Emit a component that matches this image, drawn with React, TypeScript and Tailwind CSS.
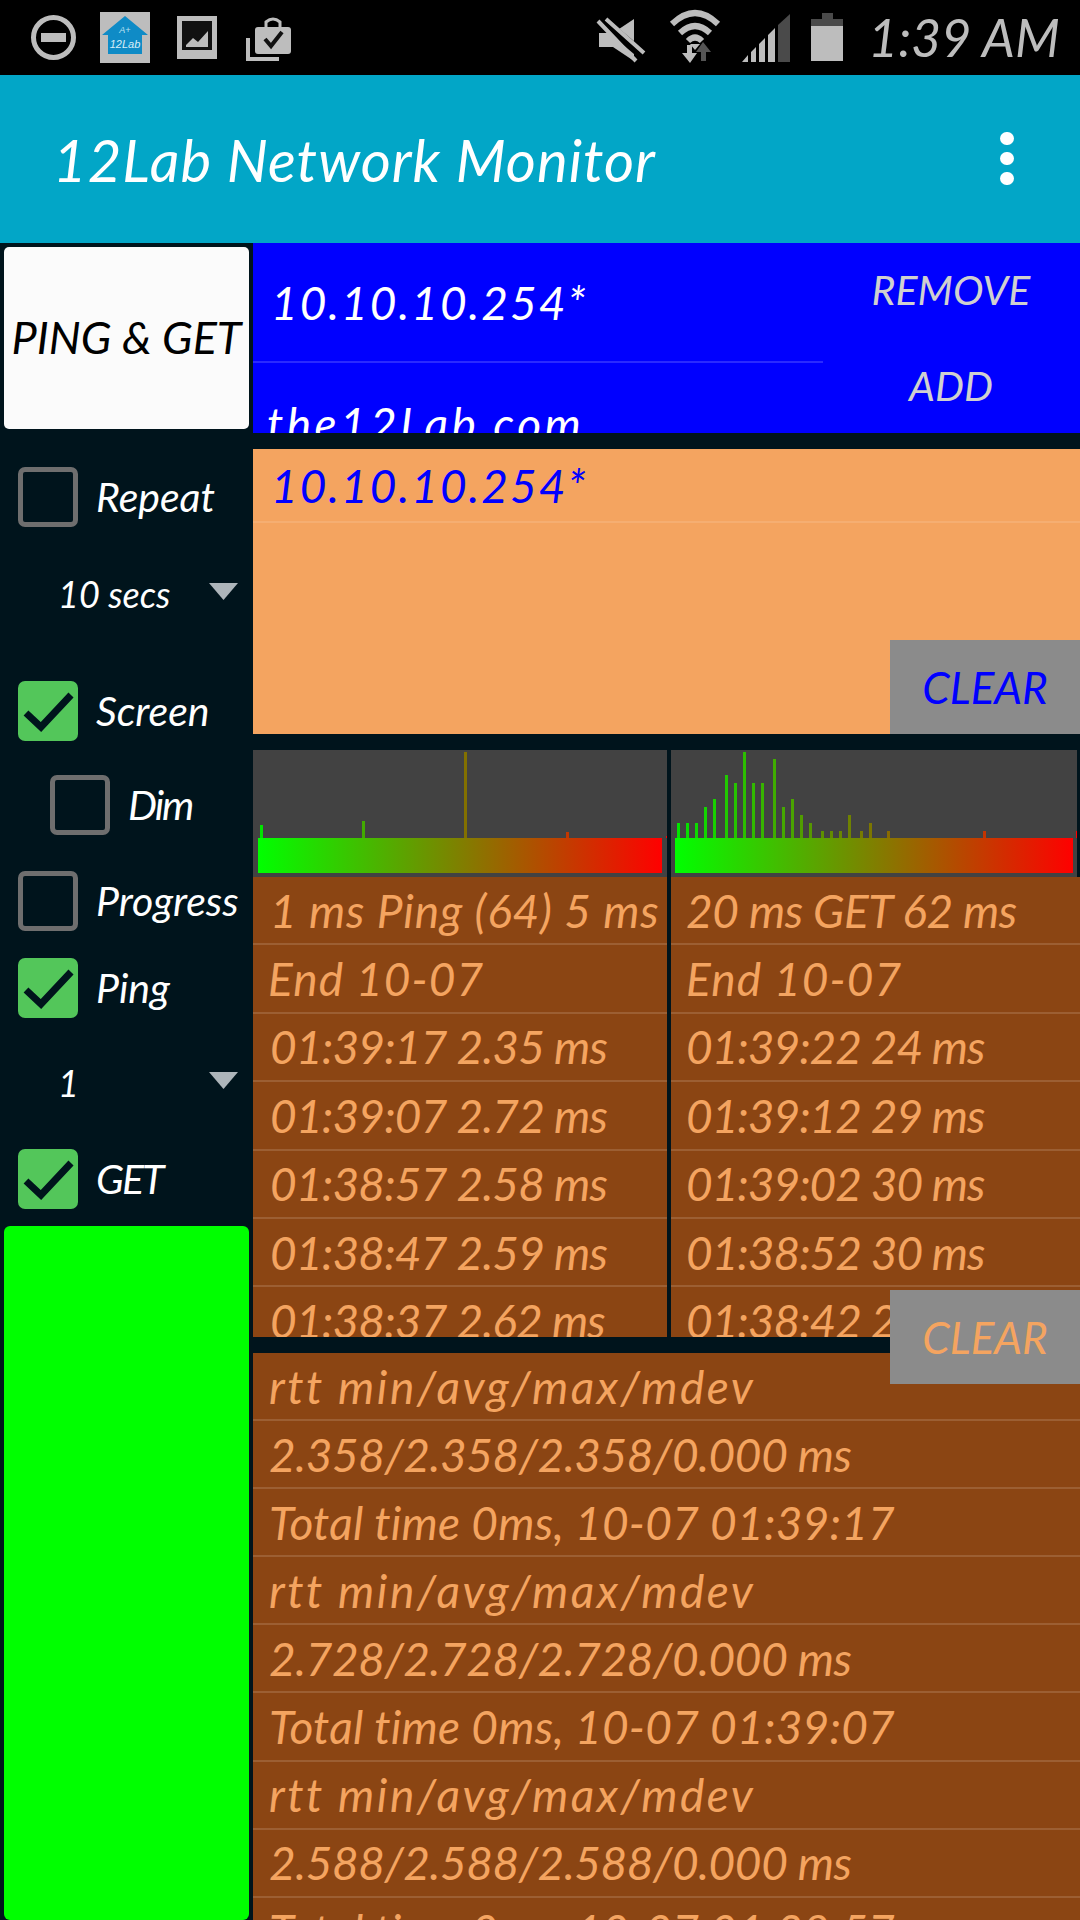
const font = "font-['Lato','Noto_Sans',sans-serif] italic";

function Check({ label, checked, indent, track }: { label: string; checked?: boolean; indent?: boolean; track?: string }) {
  return (
    <div className={`flex items-center h-[60px] gap-[18px] ${indent ? 'pl-[50px]' : 'pl-[18px]'}`}>
      {checked ? (
        <svg width="60" height="60" viewBox="0 0 60 60" className="shrink-0">
          <rect width="60" height="60" rx="7" fill="#53c65a" />
          <path d="M8 32L23 46L53 14" fill="none" stroke="#00141c" strokeWidth="7" />
        </svg>
      ) : (
        <div className="w-[60px] h-[60px] shrink-0 border-[5px] border-[#6e6e6e] rounded-[7px]" />
      )}
      <span className={`text-white text-[41px] ${track ?? ''}`}>{label}</span>
    </div>
  );
}

function Drop({ label }: { label: string }) {
  return (
    <div className="flex items-center justify-between h-[60px] pl-[58px] pr-[15px]">
      <span className="text-white text-[36px]">{label}</span>
      <svg width="29" height="17" viewBox="0 0 29 17" className="mb-[6px]">
        <polygon points="0,0 29,0 14.5,17" fill="#adb5ba" />
      </svg>
    </div>
  );
}

function Chart({ width, bars, x0, x1 }: { width: number; bars: [number, number][]; x0: number; x1: number }) {
  return (
    <svg width={width} height="127" viewBox={`0 0 ${width} 127`} className="block">
      <defs>
        <linearGradient id={`g${width}`} x1="0" x2="1" y1="0" y2="0">
          <stop offset="0" stopColor="#00ff00" />
          <stop offset="1" stopColor="#ff0000" />
        </linearGradient>
      </defs>
      <rect width={width} height="127" fill="#424242" />
      {bars.map(([x, top], i) => {
        const t = Math.min(1, Math.max(0, (x - x0) / (x1 - x0)));
        return (
          <rect
            key={i}
            x={x}
            y={top}
            width="3"
            height={88 - top}
            fill={`rgb(${Math.round(255 * t)},${Math.round(255 * (1 - t) * 0.9)},0)`}
          />
        );
      })}
      <rect x={x0} y="88" width={x1 - x0} height="35" fill={`url(#g${width})`} />
    </svg>
  );
}

function Row({ children, className }: { children: string; className?: string }) {
  return (
    <div className={`h-[68.4px] border-b-2 border-[#9c5f33] flex items-center whitespace-nowrap overflow-hidden text-[#f4a460] text-[46px] ${className ?? ''}`}>
      {children}
    </div>
  );
}

const leftRows: [string, string][] = [
  ['1 ms Ping (64) 5 ms', 'pl-[17px] tracking-[0.8px]'],
  ['End 10-07', 'pl-[15px] tracking-[1.1px]'],
  ['01:39:17 2.35 ms', 'pl-[17px] tracking-[-0.8px]'],
  ['01:39:07 2.72 ms', 'pl-[17px] tracking-[-0.8px]'],
  ['01:38:57 2.58 ms', 'pl-[17px] tracking-[-0.8px]'],
  ['01:38:47 2.59 ms', 'pl-[17px] tracking-[-0.8px]'],
  ['01:38:37 2.62 ms', 'pl-[17px] tracking-[-0.8px]'],
];
const rightRows: [string, string][] = [
  ['20 ms GET 62 ms', 'pl-[15px] tracking-[-0.4px]'],
  ['End 10-07', 'pl-[15px] tracking-[1.1px]'],
  ['01:39:22 24 ms', 'pl-[15px] tracking-[-1px]'],
  ['01:39:12 29 ms', 'pl-[15px] tracking-[-1px]'],
  ['01:39:02 30 ms', 'pl-[15px] tracking-[-1px]'],
  ['01:38:52 30 ms', 'pl-[15px] tracking-[-1px]'],
  ['01:38:42 28 ms', 'pl-[15px] tracking-[-1px]'],
];
const logRows: [string, string][] = [
  ['rtt min/avg/max/mdev', 'tracking-[2.5px]'],
  ['2.358/2.358/2.358/0.000 ms', 'tracking-[-0.4px]'],
  ['Total time 0ms, 10-07 01:39:17', 'tracking-[0.25px]'],
  ['rtt min/avg/max/mdev', 'tracking-[2.5px]'],
  ['2.728/2.728/2.728/0.000 ms', 'tracking-[-0.4px]'],
  ['Total time 0ms, 10-07 01:39:07', 'tracking-[0.25px]'],
  ['rtt min/avg/max/mdev', 'tracking-[2.5px]'],
  ['2.588/2.588/2.588/0.000 ms', 'tracking-[-0.4px]'],
  ['Total time 0ms, 10-07 01:38:57', 'tracking-[0.25px]'],
];

const leftBars: [number, number][] = [[7, 75], [109, 71], [211, 2], [313, 82], [413, 86]];
const rightBars: [number, number][] = [52, 79, 106, 133, 160, 196, 223, 250, 277, 304, 340, 367, 394, 421, 448, 484, 511, 538, 565, 601, 628, 682, 970, 1248].map((z, i) => {
  const tops = [279, 279, 279, 231, 207, 135, 159, 65, 159, 159, 87, 231, 207, 255, 279, 303, 303, 303, 255, 303, 279, 303, 303, 303];
  return [Math.round(660 + z / 3 - 671), Math.round(730 + tops[i] / 3 - 750)] as [number, number];
});

function StatusBar() {
  return (
    <div className="h-[75px] bg-black flex items-center relative shrink-0">
      <svg width="1080" height="75" viewBox="0 0 1080 75" className="block">
        <circle cx="53.5" cy="37.5" r="20" fill="none" stroke="#bdbdbd" strokeWidth="5" />
        <rect x="41" y="33" width="25" height="9" fill="#bdbdbd" />
        <rect x="100" y="12" width="50" height="51" fill="#bdbdbd" />
        <path d="M125 16L148 35H142V54H108V35H102Z" fill="#0f8bc6" />
        <text x="125" y="33" fontSize="9" fill="#bde3f2" textAnchor="middle" fontFamily="Liberation Sans">A+</text>
        <text x="125" y="48" fontSize="11" fill="#d8eef7" textAnchor="middle" fontFamily="Liberation Sans">12Lab</text>
        <rect x="177" y="16" width="40" height="43" fill="#bdbdbd" />
        <rect x="182" y="21" width="30" height="29" fill="#111" />
        <path d="M186 45L193 38L198 42L208 31V47H186Z" fill="#bdbdbd" />
        <path d="M248 38V59H279" fill="none" stroke="#bdbdbd" strokeWidth="4" />
        <rect x="255" y="27" width="36" height="27" rx="3" fill="#bdbdbd" />
        <path d="M266 27V22Q273 16 280 22V27" fill="none" stroke="#bdbdbd" strokeWidth="3" />
        <path d="M265 39L271 46L282 32" fill="none" stroke="#111" strokeWidth="4" />
        <path d="M599 33H613L634 19V61L613 47H599Z" fill="#bdbdbd" />
        <path d="M600 19L644 56" stroke="#000" strokeWidth="10" />
        <path d="M598 21L636 61M606 19L644 53" stroke="#bdbdbd" strokeWidth="4" />
        <path d="M672 24Q695 2 718 24M680 33Q695 19 710 33M688 41Q695 34 702 41" fill="none" stroke="#bdbdbd" strokeWidth="6" />
        <path d="M690 44H700L695 50Z" fill="#bdbdbd" />
        <path d="M687 45V53H682L690 63L697 53H692V45Z" fill="#bdbdbd" />
        <path d="M703 42L696 52H701V61H706V52H711Z" fill="#555" />
        <path d="M742 62L748 55V62ZM751 52L756 47V62H751ZM759 44L765 38V62H759ZM768 35L775 28V62H768Z" fill="#bdbdbd" />
        <path d="M778 25L790 14V62H778Z" fill="#4a4a4a" />
        <rect x="822" y="13" width="11" height="6" fill="#4a4a4a" />
        <rect x="811" y="19" width="32" height="7" fill="#4a4a4a" />
        <rect x="811" y="26" width="32" height="35" fill="#bdbdbd" />
      </svg>
      <span className="absolute left-[868px] top-[7px] text-[#bdbdbd] text-[52px] leading-[60px] whitespace-nowrap">1:39 AM</span>
    </div>
  );
}

export default function App() {
  return (
    <div className={`w-[1080px] h-[1920px] overflow-hidden bg-[#00141c] flex flex-col ${font}`}>
      <StatusBar />
      <div className="h-[168px] shrink-0 bg-[#02a6c7] flex items-center justify-between pl-[53px] pr-[66px]">
        <span className="text-white text-[58px] tracking-[1px]">12Lab Network Monitor</span>
        <div className="flex flex-col gap-[7px] mt-[-2px]">
          <div className="w-[14px] h-[13px] rounded-full bg-white" />
          <div className="w-[14px] h-[13px] rounded-full bg-white" />
          <div className="w-[14px] h-[13px] rounded-full bg-white" />
        </div>
      </div>
      <div className="flex flex-1 min-h-0">
        {/* left column */}
        <div className="w-[253px] shrink-0 flex flex-col">
          <div className="mx-[4px] mt-[4px] h-[182px] bg-[#fbfbfb] rounded-[5px] flex items-center justify-center text-black text-[45px] whitespace-nowrap">
            PING &amp; GET
          </div>
          <div className="mt-[38px]"><Check label="Repeat" /></div>
          <div className="mt-[37px]"><Drop label="10 secs" /></div>
          <div className="mt-[57px]"><Check label="Screen" checked /></div>
          <div className="mt-[34px]"><Check label="Dim" indent track="tracking-[-2px]" /></div>
          <div className="mt-[36px]"><Check label="Progress" /></div>
          <div className="mt-[27px]"><Check label="Ping" checked /></div>
          <div className="mt-[35px]"><Drop label="1" /></div>
          <div className="mt-[36px]"><Check label="GET" checked track="tracking-[-2px]" /></div>
          <div className="mt-[17px] mx-[4px] flex-1 bg-[#00ff00] rounded-[6px]" />
        </div>

        {/* right column */}
        <div className="flex-1 flex flex-col relative min-w-0">
          <div className="h-[190px] shrink-0 bg-[#0000ff] flex overflow-hidden">
            <div className="w-[570px] shrink-0">
              <div className="h-[120px] border-b-2 border-[#2a2aff] pl-[18px] flex items-center text-white text-[46px] tracking-[2px]">10.10.10.254*</div>
              <div className="h-[120px] pl-[14px] flex items-center text-white text-[46px] tracking-[3.4px]">the12Lab.com</div>
            </div>
            <div className="w-[256px] flex flex-col items-center pt-[22px] gap-[46px] text-[#d0d0d0] text-[41px] leading-[50px]">
              <span>REMOVE</span>
              <span>ADD</span>
            </div>
          </div>

          <div className="mt-[16px] h-[285px] shrink-0 bg-[#f4a460]">
            <div className="h-[74px] border-b-2 border-[#f5ae72] pl-[18px] flex items-center text-[#0000ff] text-[46px] tracking-[2px]">10.10.10.254*</div>
          </div>

          <div className="mt-[16px] flex h-[587px] shrink-0">
            <div className="w-[414px] shrink-0 flex flex-col">
              <Chart width={414} bars={leftBars} x0={5} x1={409} />
              <div className="h-[460px] overflow-hidden bg-[#8b4513]">
                {leftRows.map(([r, c]) => (
                  <Row key={r} className={c}>{r}</Row>
                ))}
              </div>
            </div>
            <div className="w-[4px] bg-[#00141c] shrink-0" />
            <div className="flex-1 flex flex-col min-w-0">
              <div className="pr-[3px]">
                <Chart width={406} bars={rightBars} x0={4} x1={402} />
              </div>
              <div className="h-[460px] overflow-hidden bg-[#8b4513]">
                {rightRows.map(([r, c]) => (
                  <Row key={r} className={c}>{r}</Row>
                ))}
              </div>
            </div>
          </div>

          <div className="mt-[16px] flex-1 bg-[#8b4513] overflow-hidden">
            {logRows.map(([r, t], i) => (
              <div key={i} className="h-[68.1px]">
                <div className={`h-full border-b-2 border-[#9c5f33] pl-[16px] flex items-center whitespace-nowrap text-[#f4a460] text-[46px] ${t}`}>{r}</div>
              </div>
            ))}
          </div>

          {/* overlays */}
          <div className="absolute left-[637px] top-[397px] w-[190px] h-[94px] bg-[#8b8b8b] flex items-center justify-center text-[#0000ff] text-[44px]">CLEAR</div>
          <div className="absolute left-[637px] top-[1047px] w-[190px] h-[94px] bg-[#8b8b8b] flex items-center justify-center text-[#f4a460] text-[44px]">CLEAR</div>
        </div>
      </div>
    </div>
  );
}
